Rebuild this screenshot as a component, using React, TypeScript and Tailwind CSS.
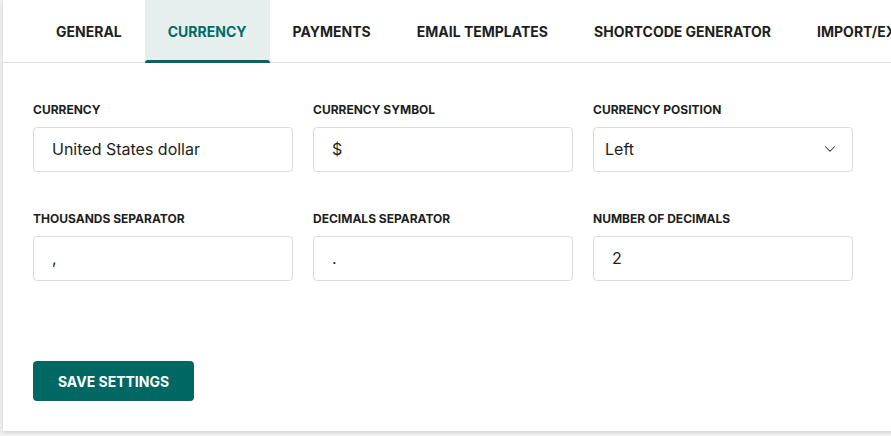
import { ChevronDown } from 'lucide-react';

const tabs = ['General', 'Currency', 'Payments', 'Email Templates', 'Shortcode Generator', 'Import/Export'];

function Field({ label, value, select }: { label: string; value: string; select?: boolean }) {
  return (
    <div className="flex flex-col">
      <label className="text-[12px] leading-4 font-bold uppercase text-[#1e1e1e] mb-[9px]">{label}</label>
      {select ? (
        <div className="h-[45px] border border-[#dcdcde] rounded-[4px] bg-white flex items-center justify-between pl-[11px] pr-[13px] text-[16px] text-[#1e1e1e]">
          <span className="-mt-px">{value}</span>
          <ChevronDown size={18} strokeWidth={1.4} className="text-[#2c3338] -mt-px" />
        </div>
      ) : (
        <div className="h-[45px] border border-[#dcdcde] rounded-[4px] bg-white flex items-center pl-[18px] text-[16px] text-[#1e1e1e]">
          <span className="-mt-px">{value}</span>
        </div>
      )}
    </div>
  );
}

export default function App() {
  return (
    <div className="w-[891px] h-[436px] overflow-hidden bg-[#efefef]" style={{ fontFamily: 'Inter, "Liberation Sans", sans-serif' }}>
      <div className="ml-[3px] w-[920px] h-[431px] bg-white shadow-[0_1px_3px_rgba(0,0,0,0.15)] flex flex-col">
        <div className="flex pl-[30px] border-b border-[#dcdcde] h-[63px] whitespace-nowrap">
          {tabs.map(t => {
            const active = t === 'Currency';
            return (
              <div
                key={t}
                className={
                  active
                    ? 'relative px-[23px] flex items-center bg-[#e7eeee] text-[#006c66] text-[14px] font-bold uppercase -mb-px'
                    : 'relative px-[23px] flex items-center text-[#1e1e1e] text-[14px] font-bold uppercase'
                }
              >
                <span>{t}</span>
                {active && <div className="absolute left-0 right-0 bottom-0 h-[3px] bg-[#00665f] rounded-t-[3px]" />}
              </div>
            );
          })}
        </div>
        <div className="pl-[30px] pt-[39px]">
          <div className="grid grid-cols-[260px_260px_260px] gap-x-[20px] gap-y-[39px]">
            <Field label="Currency" value="United States dollar" />
            <Field label="Currency Symbol" value="$" />
            <Field label="Currency Position" value="Left" select />
            <Field label="Thousands Separator" value="," />
            <Field label="Decimals Separator" value="." />
            <Field label="Number of Decimals" value="2" />
          </div>
          <button className="mt-[80px] w-[161px] h-[40px] rounded-[4px] bg-[#016763] text-white text-[14px] font-bold uppercase">
            Save Settings
          </button>
        </div>
      </div>
    </div>
  );
}
